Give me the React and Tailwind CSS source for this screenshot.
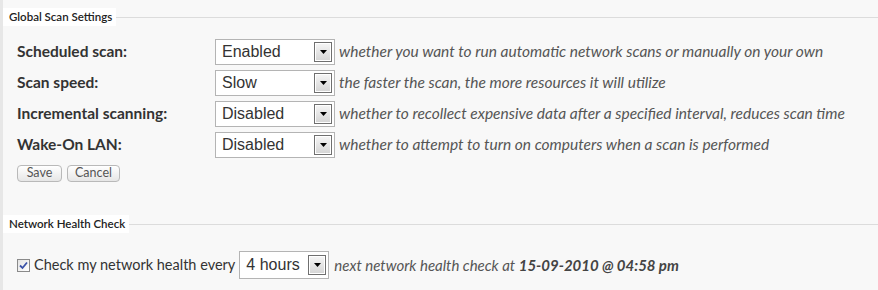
import React from "react";

const font = { fontFamily: "Lato, 'Open Sans', sans-serif" };

function Arrow() {
  return (
    <div className="w-[18px] h-[20px] border border-[#6f6f6f] bg-gradient-to-b from-[#f6f6f6] to-[#d4d4d4] flex items-center justify-center shadow-[inset_0_0_0_1px_#ffffff]">
      <svg width="7" height="4" viewBox="0 0 7 4"><path d="M0 0H7L3.5 4Z" fill="#000" /></svg>
    </div>
  );
}

function Select({ value, w = "w-[120px]", h = "h-[26px]" }) {
  return (
    <div className={`${w} ${h} shrink-0 border border-[#b4b4b4] bg-white flex items-center justify-between pl-[6px] pr-[2px]`}>
      <span className="text-[16px] text-[#333] leading-none" style={{ fontFamily: "'Liberation Sans', Arial, sans-serif" }}>{value}</span>
      <Arrow />
    </div>
  );
}

function Legend({ children }) {
  return (
    <div className="flex items-center h-[18px]">
      <div className="bg-white h-full flex items-center pl-[6px] pr-[4px] whitespace-nowrap">
        <span className="text-[11.5px] font-semibold text-[#222] leading-none">{children}</span>
      </div>
      <div className="flex-1 h-px bg-[#dcdcdc]" />
    </div>
  );
}

function Row({ label, value, desc }) {
  return (
    <div className="flex items-center h-[26px]">
      <div className="w-[198px] text-[15.5px] font-bold text-[#333] whitespace-nowrap">{label}</div>
      <Select value={value} />
      <div className="ml-[4px] text-[15.5px] italic text-[#555] whitespace-nowrap">{desc}</div>
    </div>
  );
}

function Btn({ children, w }) {
  return (
    <div className={`${w} h-[17px] rounded-[4px] border border-[#b9b9b9] bg-gradient-to-b from-[#ffffff] to-[#e6e6e6] flex items-center justify-center text-[12.5px] text-[#555] leading-none`}>
      {children}
    </div>
  );
}

export default function App() {
  return (
    <div className="w-[878px] h-[290px] bg-[#f8f8f8] border-l-[3px] border-[#e7e7e7] pt-[8px] overflow-hidden" style={font}>
      <Legend>Global Scan Settings</Legend>
      <div className="pl-[14px] mt-[13px] flex flex-col gap-[5px]">
        <Row label="Scheduled scan:" value="Enabled" desc="whether you want to run automatic network scans or manually on your own" />
        <Row label="Scan speed:" value="Slow" desc="the faster the scan, the more resources it will utilize" />
        <Row label="Incremental scanning:" value="Disabled" desc="whether to recollect expensive data after a specified interval, reduces scan time" />
        <Row label="Wake-On LAN:" value="Disabled" desc="whether to attempt to turn on computers when a scan is performed" />
      </div>
      <div className="pl-[14px] mt-[7px] flex gap-[5px]">
        <Btn w="w-[45px]">Save</Btn>
        <Btn w="w-[53px]">Cancel</Btn>
      </div>
      <div className="mt-[33px]">
        <Legend>Network Health Check</Legend>
      </div>
      <div className="pl-[14px] mt-[18px] flex items-center h-[28px]">
        <div className="w-[13px] h-[13px] border border-[#8a8a8a] bg-gradient-to-br from-[#e4e4e4] to-[#ffffff] flex items-center justify-center">
          <svg width="9" height="9" viewBox="0 0 9 9"><path d="M1 4.5L3.5 7L8 1.5" stroke="#3a52a8" strokeWidth="1.8" fill="none" /></svg>
        </div>
        <span className="ml-[4px] text-[14.5px] text-[#333] whitespace-nowrap">Check my network health every</span>
        <div className="ml-[4px]">
          <Select value="4 hours" w="w-[90px]" h="h-[28px]" />
        </div>
        <span className="ml-[5px] text-[15px] italic text-[#555] whitespace-nowrap">
          next network health check at <b className="text-[#444]">15-09-2010 @ 04:58 pm</b>
        </span>
      </div>
    </div>
  );
}
